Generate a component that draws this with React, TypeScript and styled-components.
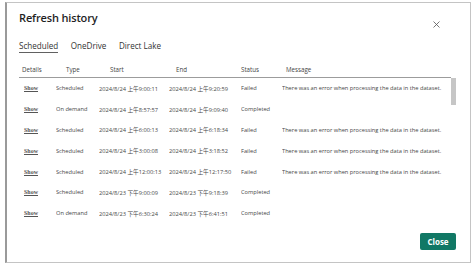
import React from "react";
import styled, { createGlobalStyle } from "styled-components";

const GlobalStyle = createGlobalStyle`
  html, body {
    margin: 0;
    padding: 0;
    background: #ffffff;
  }
  body {
    font-family: "Open Sans", "Noto Sans CJK SC", sans-serif;
  }
`;

const Dialog = styled.div`
  box-sizing: border-box;
  margin: 2px 0 0 5px;
  width: 466px;
  height: 261px;
  border: 1px solid #c4c4c4;
  border-left: 2px solid #9a9a9a;
  display: flex;
  flex-direction: column;
  padding: 4px 14px 12px 12px;
  color: #242424;
`;

const Header = styled.div`
  display: flex;
  align-items: flex-start;
  justify-content: space-between;
`;

const Title = styled.h1`
  margin: 0;
  font-size: 11px;
  font-weight: 600;
  line-height: 22px;
  letter-spacing: -0.15px;
  color: #1f1f1f;
`;

const CloseIcon = styled.button`
  margin: 14px 16px 0 0;
  padding: 0;
  border: 0;
  background: none;
  width: 7px;
  height: 7px;
  display: flex;
`;

const Tabs = styled.div`
  display: flex;
  gap: 12.5px;
  margin-top: 11px;
`;

const Tab = styled.div<{ $active?: boolean }>`
  font-size: 8.1px;
  line-height: 11px;
  padding-bottom: 1px;
  color: #333;
  border-bottom: 1px solid ${(p) => (p.$active ? "#616161" : "transparent")};
`;

const cols = "37px 43px 70px 72px 41px 1fr";

const TableHead = styled.div`
  display: grid;
  grid-template-columns: ${cols};
  margin-top: 8px;
  margin-right: 5px;
  height: 16px;
  align-items: center;
  border-bottom: 1px solid #9c9c9c;
`;

const HeadCell = styled.div<{ $pad: number }>`
  font-size: 6.2px;
  color: #444;
  padding-left: ${(p) => p.$pad}px;
  white-space: nowrap;
`;

const BodyWrap = styled.div`
  display: flex;
  height: 146px;
`;

const Rows = styled.div`
  flex: 1;
  display: flex;
  flex-direction: column;
`;

const Row = styled.div`
  display: grid;
  grid-template-columns: ${cols};
  height: 20.8px;
  align-items: center;
`;

const Cell = styled.div`
  font-size: 5.7px;
  color: #474747;
  white-space: nowrap;
  overflow: hidden;
`;

const ShowLink = styled.a`
  font-family: "Liberation Serif", "Noto Sans CJK SC", serif;
  font-size: 6px;
  font-weight: 700;
  color: #555;
  text-decoration: underline;
  padding-left: 5px;
`;

const ScrollTrack = styled.div`
  width: 5px;
`;

const Thumb = styled.div`
  height: 27px;
  background: #c6c6c6;
`;

const Footer = styled.div`
  margin-top: auto;
  display: flex;
  justify-content: flex-end;
`;

const CloseButton = styled.button`
  width: 36px;
  height: 17px;
  border: 0;
  border-radius: 2px;
  background: #117865;
  color: #ffffff;
  font-family: "Open Sans", sans-serif;
  font-size: 8px;
  font-weight: 700;
  padding: 0;
`;

type Run = {
  type: string;
  start: string;
  end: string;
  status: string;
  message: string;
};

const ERR = "There was an error when processing the data in the dataset.";

const runs: Run[] = [
  { type: "Scheduled", start: "2024/8/24 上午9:00:11", end: "2024/8/24 上午9:20:59", status: "Failed", message: ERR },
  { type: "On demand", start: "2024/8/24 上午8:57:57", end: "2024/8/24 上午9:09:40", status: "Completed", message: "" },
  { type: "Scheduled", start: "2024/8/24 上午6:00:13", end: "2024/8/24 上午6:18:34", status: "Failed", message: ERR },
  { type: "Scheduled", start: "2024/8/24 上午3:00:08", end: "2024/8/24 上午3:18:52", status: "Failed", message: ERR },
  { type: "Scheduled", start: "2024/8/24 上午12:00:13", end: "2024/8/24 上午12:17:50", status: "Failed", message: ERR },
  { type: "Scheduled", start: "2024/8/23 下午9:00:09", end: "2024/8/23 下午9:18:39", status: "Completed", message: "" },
  { type: "On demand", start: "2024/8/23 下午6:30:24", end: "2024/8/23 下午6:41:51", status: "Completed", message: "" },
];

const heads: [string, number][] = [
  ["Details", 3],
  ["Type", 10],
  ["Start", 11],
  ["End", 7],
  ["Status", 0],
  ["Message", 4],
];

export default function App() {
  return (
    <>
      <GlobalStyle />
      <Dialog>
        <Header>
          <Title>Refresh history</Title>
          <CloseIcon aria-label="Close">
            <svg width="7" height="7" viewBox="0 0 7 7">
              <path d="M0.5 0.5L6.5 6.5M6.5 0.5L0.5 6.5" stroke="#555" strokeWidth="0.8" />
            </svg>
          </CloseIcon>
        </Header>
        <Tabs>
          <Tab $active>Scheduled</Tab>
          <Tab>OneDrive</Tab>
          <Tab>Direct Lake</Tab>
        </Tabs>
        <TableHead>
          {heads.map(([h, pad]) => (
            <HeadCell key={h} $pad={pad}>
              {h}
            </HeadCell>
          ))}
        </TableHead>
        <BodyWrap>
          <Rows>
            {runs.map((r, i) => (
              <Row key={i}>
                <Cell>
                  <ShowLink href="#">Show</ShowLink>
                </Cell>
                <Cell>{r.type}</Cell>
                <Cell>{r.start}</Cell>
                <Cell>{r.end}</Cell>
                <Cell>{r.status}</Cell>
                <Cell>{r.message}</Cell>
              </Row>
            ))}
          </Rows>
          <ScrollTrack>
            <Thumb />
          </ScrollTrack>
        </BodyWrap>
        <Footer>
          <CloseButton>Close</CloseButton>
        </Footer>
      </Dialog>
    </>
  );
}
